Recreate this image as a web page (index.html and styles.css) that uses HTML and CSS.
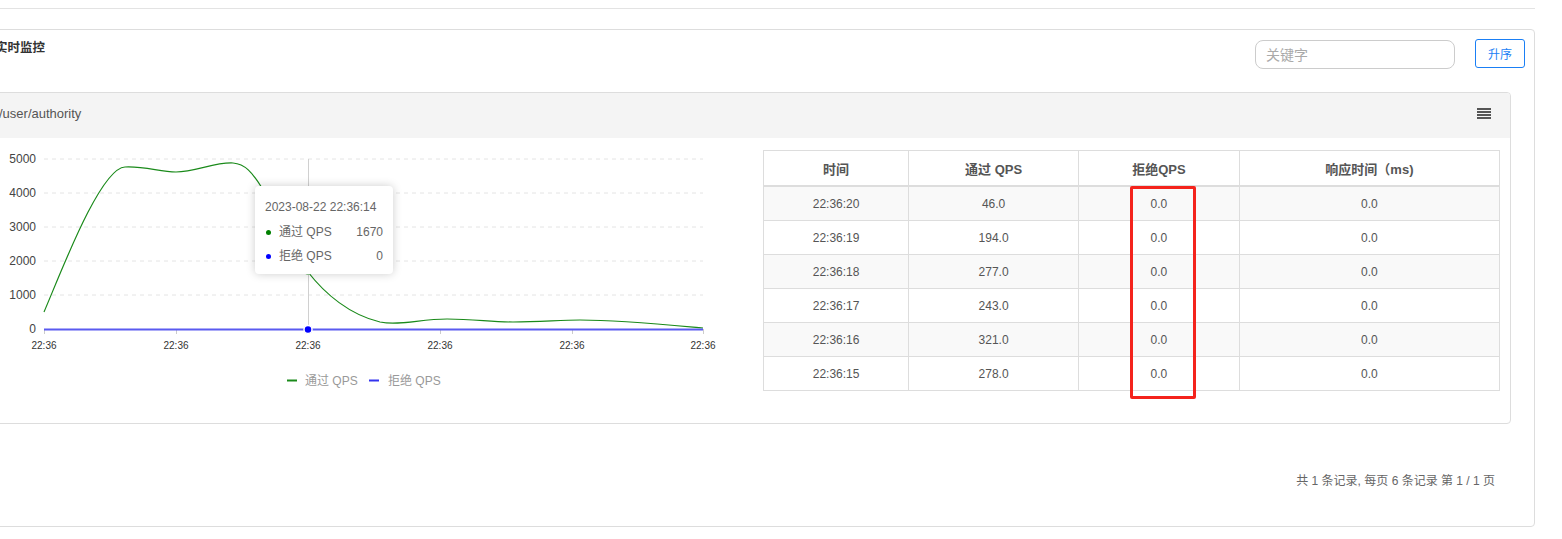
FILE: index.html
```
<!DOCTYPE html>
<html lang="zh-CN">
<head>
<meta charset="utf-8">
<title>实时监控</title>
<link rel="stylesheet" href="styles.css">
</head>
<body>
<div class="page">
  <div class="topbar"></div>
  <div class="panel">
    <div class="panel-head">
      <div class="title">实时监控</div>
      <div class="tools">
        <input class="search" type="text" placeholder="关键字">
        <button class="btn">升序</button>
      </div>
    </div>
    <div class="card">
      <div class="card-head">
        <span class="res">/user/authority</span>
        <span class="menu"><i></i><i></i><i></i><i></i></span>
      </div>
      <div class="card-body">
        <div class="chart">
          <svg class="chart-svg" width="772" height="285" viewBox="-19 138 772 285">
            <g class="grid">
              <line x1="44" y1="159" x2="703" y2="159"/>
              <line x1="44" y1="193" x2="703" y2="193"/>
              <line x1="44" y1="227" x2="703" y2="227"/>
              <line x1="44" y1="261" x2="703" y2="261"/>
              <line x1="44" y1="295" x2="703" y2="295"/>
            </g>
            <g class="ylab">
              <text x="36" y="163">5000</text>
              <text x="36" y="197">4000</text>
              <text x="36" y="231">3000</text>
              <text x="36" y="265">2000</text>
              <text x="36" y="299">1000</text>
              <text x="36" y="333">0</text>
            </g>
            <line class="axis" x1="44" y1="329.5" x2="703" y2="329.5"/>
            <g class="ticks">
              <line x1="44.5" y1="329" x2="44.5" y2="334"/>
              <line x1="176.5" y1="329" x2="176.5" y2="334"/>
              <line x1="308.5" y1="329" x2="308.5" y2="334"/>
              <line x1="440.5" y1="329" x2="440.5" y2="334"/>
              <line x1="572.5" y1="329" x2="572.5" y2="334"/>
              <line x1="703.5" y1="329" x2="703.5" y2="334"/>
            </g>
            <g class="xlab">
              <text x="44" y="349">22:36</text>
              <text x="176" y="349">22:36</text>
              <text x="308" y="349">22:36</text>
              <text x="440" y="349">22:36</text>
              <text x="572" y="349">22:36</text>
              <text x="703" y="349">22:36</text>
            </g>
            <line class="cross" x1="308.5" y1="159" x2="308.5" y2="329"/>
            <path class="pass" d="M44,312 C60,275 100,168 125,167 C145,166 160,172 176,172 C195,172 215,162 233,163 C245,164 252,172 262,188 C280,218 295,255 308,272 C325,294 350,315 380,322 C400,326 420,319 447,319 C475,319 490,322 513,322 C540,322 560,320 580,320 C620,320 670,325 703,328"/>
            <line class="block" x1="44" y1="329.5" x2="703" y2="329.5"/>
            <circle class="pdot" cx="308" cy="272" r="3"/>
            <circle class="bdot" cx="308" cy="329.5" r="4"/>
            <g class="legend">
              <line class="lg-pass" x1="287" y1="380.5" x2="297" y2="380.5"/>
              <text x="305" y="384.5">通过 QPS</text>
              <line class="lg-block" x1="369" y1="380.5" x2="379" y2="380.5"/>
              <text x="388" y="384.5">拒绝 QPS</text>
            </g>
          </svg>
          <div class="tooltip">
            <div class="tt-time">2023-08-22 22:36:14</div>
            <div class="tt-row"><span class="dot green"></span><span class="tt-name">通过 QPS</span><span class="tt-val">1670</span></div>
            <div class="tt-row"><span class="dot blue"></span><span class="tt-name">拒绝 QPS</span><span class="tt-val">0</span></div>
          </div>
        </div>
        <div class="table-wrap">
          <table class="data">
            <thead>
              <tr><th class="c1">时间</th><th class="c2">通过 QPS</th><th class="c3">拒绝QPS</th><th class="c4">响应时间（ms)</th></tr>
            </thead>
            <tbody>
              <tr><td>22:36:20</td><td>46.0</td><td>0.0</td><td>0.0</td></tr>
              <tr><td>22:36:19</td><td>194.0</td><td>0.0</td><td>0.0</td></tr>
              <tr><td>22:36:18</td><td>277.0</td><td>0.0</td><td>0.0</td></tr>
              <tr><td>22:36:17</td><td>243.0</td><td>0.0</td><td>0.0</td></tr>
              <tr><td>22:36:16</td><td>321.0</td><td>0.0</td><td>0.0</td></tr>
              <tr><td>22:36:15</td><td>278.0</td><td>0.0</td><td>0.0</td></tr>
            </tbody>
          </table>
          <div class="highlight"></div>
        </div>
      </div>
    </div>
    <div class="pager">共 1 条记录, 每页 6 条记录 第 1 / 1 页</div>
  </div>
</div>
</body>
</html>
```
FILE: styles.css
```
html, body {
  margin: 0;
  padding: 0;
  background: #fff;
  overflow: hidden;
}
body {
  font-family: "Liberation Sans", "Noto Sans CJK SC", sans-serif;
  color: #333;
}
.page {
  margin-left: -40px;
  width: 1575px;
}
.topbar {
  height: 8px;
  border-bottom: 1px solid #e3e3e3;
  margin-bottom: 20px;
}
.panel {
  border: 1px solid #ddd;
  border-radius: 4px;
  padding: 9px 23px 0 19px;
  height: 498px;
  box-sizing: border-box;
}
.panel-head {
  display: flex;
  justify-content: space-between;
  align-items: flex-start;
  height: 30px;
  margin-right: -14px;
  margin-bottom: 23px;
}
.title {
  padding-left: 15px;
  padding-top: 1px;
  font-size: 12.5px;
  font-weight: bold;
  color: #333;
  line-height: 17px;
}
.tools {
  display: flex;
  align-items: flex-start;
  gap: 20px;
}
.search {
  width: 200px;
  height: 29px;
  box-sizing: border-box;
  margin-top: 1px;
  border: 1px solid #ccc;
  border-radius: 8px;
  padding: 0 10px;
  font-family: "Liberation Sans", "Noto Sans CJK SC", sans-serif;
  font-size: 14px;
  outline: none;
}
.search::placeholder {
  color: #aaa;
}
.btn {
  width: 50px;
  height: 29px;
  box-sizing: border-box;
  border: 1px solid #1a7ff5;
  border-radius: 3px;
  background: #fff;
  color: #1a7ff5;
  font-family: "Liberation Sans", "Noto Sans CJK SC", sans-serif;
  font-size: 12px;
  padding: 0;
}
.card {
  border: 1px solid #ddd;
  border-radius: 4px;
  overflow: hidden;
}
.card-head {
  height: 45px;
  background: #f4f4f4;
  display: flex;
  align-items: center;
  justify-content: space-between;
  padding: 0 19px 0 18px;
}
.res {
  font-size: 13px;
  color: #555;
  margin-top: -5px;
}
.menu {
  display: flex;
  flex-direction: column;
  gap: 1px;
  width: 14px;
  margin-top: -4px;
}
.menu i {
  display: block;
  height: 2px;
  background: #555;
}
.card-body {
  display: flex;
  align-items: flex-start;
  height: 285px;
}
.chart {
  position: relative;
  width: 772px;
  height: 285px;
  flex: none;
}
.chart-svg {
  display: block;
}
.grid line {
  stroke: #e4e4e4;
  stroke-width: 1;
  stroke-dasharray: 4 4;
}
.ylab text {
  font-size: 12px;
  fill: #444;
  text-anchor: end;
}
.xlab text {
  font-size: 10px;
  fill: #333;
  text-anchor: middle;
}
.axis {
  stroke: #ccc;
  stroke-width: 1;
}
.ticks line {
  stroke: #ccc;
  stroke-width: 1;
}
.cross {
  stroke: #d0d0d0;
  stroke-width: 1;
}
.pass {
  fill: none;
  stroke: #1a8a1a;
  stroke-width: 1.2;
}
.block {
  stroke: #5a5af0;
  stroke-width: 2;
}
.pdot {
  fill: #8fc88f;
}
.bdot {
  fill: #0000ff;
  stroke: #fff;
  stroke-width: 1.5;
}
.legend text {
  font-size: 12px;
  fill: #999;
}
.lg-pass {
  stroke: #1a8a1a;
  stroke-width: 2;
}
.lg-block {
  stroke: #3333ee;
  stroke-width: 2;
}
.tooltip {
  position: absolute;
  left: 274px;
  top: 48px;
  width: 138px;
  height: 88px;
  box-sizing: border-box;
  background: #fff;
  border-radius: 4px;
  box-shadow: 0 0 10px rgba(0, 0, 0, 0.2);
  padding: 13px 10px 0 10px;
  font-size: 12px;
  color: #666;
}
.tt-time {
  line-height: 16px;
  margin-bottom: 9px;
}
.tt-row {
  display: flex;
  align-items: center;
  line-height: 16px;
  height: 16px;
  margin-bottom: 8px;
}
.dot {
  display: inline-block;
  width: 5px;
  height: 5px;
  border-radius: 50%;
  margin-right: 8px;
  margin-left: 1px;
}
.dot.green { background: #008000; }
.dot.blue { background: #0000ff; }
.tt-name {
  flex: 1;
}
.tt-val {
  text-align: right;
}
.table-wrap {
  position: relative;
  margin-top: 12px;
  margin-left: 10px;
}
.data {
  border-collapse: collapse;
  width: 737px;
  font-size: 12px;
  color: #555;
}
.data th, .data td {
  border: 1px solid #ddd;
  text-align: center;
  padding: 0;
}
.data th {
  height: 34px;
  font-size: 13px;
  font-weight: bold;
  color: #555;
  border-bottom: 2px solid #ddd;
}
.data td {
  height: 33px;
}
.data tbody tr:nth-child(odd) td {
  background: #f9f9f9;
}
.c1 { width: 145px; }
.c2 { width: 170px; }
.c3 { width: 161px; }
.c4 { width: 261px; }
.highlight {
  position: absolute;
  left: 367px;
  top: 36px;
  width: 66px;
  height: 213px;
  box-sizing: border-box;
  border: 3px solid #f4231c;
  border-radius: 2px;
}
.pager {
  text-align: right;
  font-size: 12px;
  color: #666;
  line-height: 16px;
  margin-top: 49px;
  padding-right: 16px;
}
```
